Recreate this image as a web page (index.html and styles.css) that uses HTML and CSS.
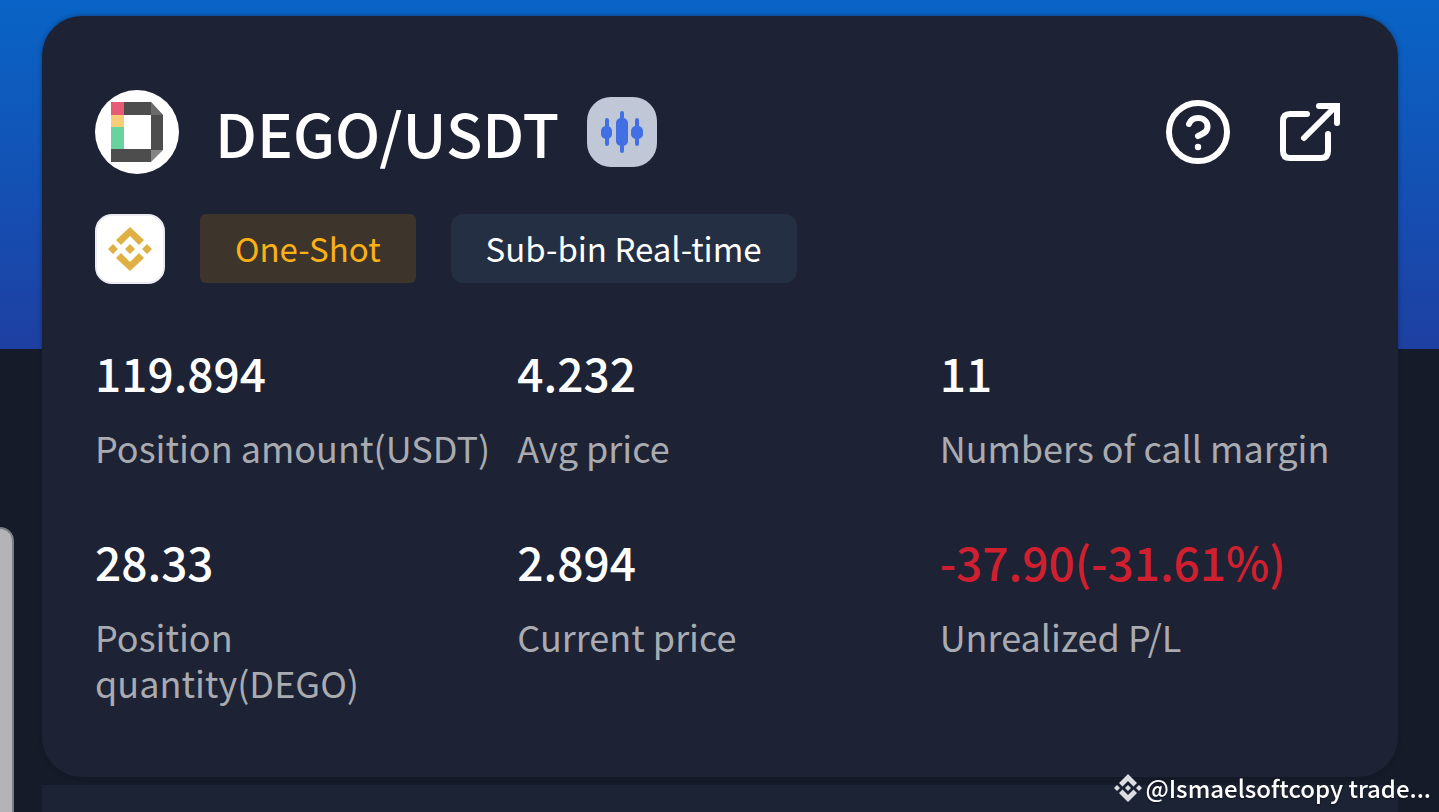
FILE: index.html
```html
<!DOCTYPE html>
<html lang="en">

<head>
  <meta charset="UTF-8">
  <meta name="viewport" content="width=device-width, initial-scale=1.0">
  <title>DEGO/USDT</title>
  <link rel="stylesheet" href="styles.css">
</head>

<body>
  <main class="page">
    <section class="card">
      <header class="card-header">
        <svg class="coin" viewBox="0 0 84 84" aria-hidden="true">
          <circle cx="42" cy="42" r="42" fill="#fff" />
          <path fill="#4d4d4d" d="M28 12h28v13H28zM56 25h12v35H56zM16 59h40v13H16z" />
          <path fill="#858585" d="M56 12l12 13H56zM56 72l12-12H56z" />
          <path fill="#6b6b6b" d="M56 12v13h12z" />
          <path fill="#e85b74" d="M16 12h13v13H16z" />
          <path fill="#f8cd78" d="M16 25h13v12H16z" />
          <path fill="#69d3a0" d="M16 37h13v22H16z" />
        </svg>
        <h1 class="pair">DEGO/USDT</h1>
        <button class="icon-btn chart" aria-label="Chart">
          <svg viewBox="0 0 70 70" fill="#4270e4" stroke="#4270e4" stroke-linecap="round">
            <path stroke-width="4" d="M20 23v24M35 16v38M50 23v24" />
            <rect x="14" y="29" width="11" height="13" rx="5" stroke="none" />
            <rect x="29" y="21" width="12" height="28" rx="5" stroke="none" />
            <rect x="44" y="29" width="12" height="13" rx="5" stroke="none" />
          </svg>
        </button>
        <div class="actions">
          <button class="icon-btn" aria-label="Help">
            <svg viewBox="0 0 64 64" fill="none" stroke="#fff" stroke-width="6" stroke-linecap="round">
              <circle cx="32" cy="32" r="29" />
              <path d="M23 24C24.500 20 28 18 32 18c5.500 0 9.500 3.500 9.500 8.500 0 6-5 7-9.500 9.500" />
              <circle cx="32" cy="47" r="3.200" fill="#fff" stroke="none" />
            </svg>
          </button>
          <button class="icon-btn" aria-label="Open">
            <svg viewBox="0 0 64 64" fill="none" stroke="#fff" stroke-width="6" stroke-linecap="round" stroke-linejoin="round">
              <path d="M29 14H12q-7 0-7 7v30q0 7 7 7h31q7 0 7-7V34M26 38L57 7" />
              <path stroke-linejoin="miter" d="M41 6H59V23" />
            </svg>
          </button>
        </div>
      </header>

      <div class="tags">
        <svg class="exchange" viewBox="0 0 70 70" aria-hidden="true">
          <rect x="1" y="1" width="68" height="68" rx="16" fill="#fff" stroke="#ebebf3" stroke-width="2" />
          <path fill="#dfb144" d="M35 13l14 13-5 5-9-9-9 9-5-5zM35 57L21 44l5-5 9 9 9-9 5 5zM35 30l5 5-5 5-5-5zM18 30l5 5-5 5-5-5zM52 30l5 5-5 5-5-5z" />
        </svg>
        <span class="tag tag-warning">One-Shot</span>
        <span class="tag">Sub-bin Real-time</span>
      </div>

      <dl class="stats">
        <div class="stat">
          <dt>Position amount(USDT)</dt>
          <dd>119.894</dd>
        </div>
        <div class="stat">
          <dt>Avg price</dt>
          <dd>4.232</dd>
        </div>
        <div class="stat">
          <dt>Numbers of call margin</dt>
          <dd>11</dd>
        </div>
        <div class="stat">
          <dt>Position quantity(DEGO)</dt>
          <dd>28.33</dd>
        </div>
        <div class="stat">
          <dt>Current price</dt>
          <dd>2.894</dd>
        </div>
        <div class="stat">
          <dt>Unrealized P/L</dt>
          <dd class="loss">-37.90(-31.61%)</dd>
        </div>
      </dl>
    </section>
    <section class="next-card"></section>
  </main>

  <div class="edge-handle"></div>
  <div class="watermark">
    <svg viewBox="0 0 28 28" fill="#dcdde0" aria-hidden="true">
      <path d="M14 0l9 9-3.500 3.500L14 7l-5.500 5.500L5 9zM14 28l-9-9 3.500-3.500L14 21l5.500-5.500L23 19zM14 11l3 3-3 3-3-3zM3 11l3 3-3 3-3-3zM25 11l3 3-3 3-3-3z" />
    </svg>
    <span>@Ismaelsoftcopy trade...</span>
  </div>
</body>

</html>
```
FILE: styles.css
```css
* {
  box-sizing: border-box;
}

body {
  margin: 0;
  background: #151b28;
  color: #fff;
  font-family: "Noto Sans CJK SC", "Noto Sans", sans-serif;
}

.page {
  display: flex;
  flex-direction: column;
  gap: 8px;
  min-height: 100vh;
  padding: 16px 41px 0 42px;
  background: linear-gradient(#0864c6, #1e3fa2) no-repeat top / 100% 349px;
}

.card {
  padding: 74px 36px 72px 53px;
  border-radius: 40px;
  background: #1d2334;
  box-shadow: 0 0 4px rgba(16, 22, 34, 0.5);
}

.card-header {
  display: flex;
  align-items: center;
  height: 84px;
  padding-right: 20px;
}

.coin {
  width: 84px;
  height: 84px;
}

.pair {
  margin: 0 28px 0 36px;
  font-size: 60px;
  font-weight: 500;
  line-height: 84px;
}

.icon-btn {
  width: 64px;
  height: 64px;
  padding: 0;
  border: none;
  background: none;
  cursor: pointer;
}

.icon-btn svg {
  display: block;
  width: 100%;
  height: 100%;
}

.chart {
  width: 70px;
  height: 70px;
  border-radius: 24px;
  background: #c0c7d6;
}

.actions {
  display: flex;
  gap: 48px;
  margin-left: auto;
}

.tags {
  display: flex;
  align-items: flex-start;
  gap: 35px;
  margin-top: 40px;
}

.exchange {
  width: 70px;
  height: 70px;
}

.tag {
  padding: 0 35px;
  border-radius: 12px;
  background: #252f43;
  font-size: 33px;
  line-height: 69px;
}

.tag-warning {
  border-radius: 6px;
  background: #3d352c;
  color: #fbb116;
}

.stats {
  display: grid;
  grid-template-columns: repeat(3, 1fr);
  row-gap: 59px;
  margin: 56px 0 0;
}

.stat {
  display: flex;
  flex-direction: column-reverse;
  justify-content: flex-end;
  gap: 20px;
  padding-right: 20px;
}

.stat dt {
  color: #a9abb1;
  font-size: 36px;
  line-height: 46px;
}

.stat dd {
  margin: 0;
  font-size: 46px;
  font-weight: 500;
  line-height: 64px;
}

.stat .loss {
  color: #d01f2f;
}

.next-card {
  flex: 1;
  min-height: 27px;
  background: #1c2334;
}

/* side panel handle over the left edge */
.edge-handle {
  position: fixed;
  top: 527px;
  bottom: 0;
  left: 0;
  width: 14px;
  border-top: 2px solid #7b7e83;
  border-right: 2px solid #7b7e83;
  border-top-right-radius: 14px;
  background: #b3b4b8;
}

.watermark {
  position: fixed;
  right: 8px;
  bottom: 8px;
  display: flex;
  align-items: center;
  gap: 3px;
  font-size: 24px;
  font-weight: 500;
  line-height: 32px;
  text-shadow: 0 1px 2px rgba(0, 0, 0, 0.5);
}

.watermark svg {
  width: 28px;
  height: 28px;
}
```
